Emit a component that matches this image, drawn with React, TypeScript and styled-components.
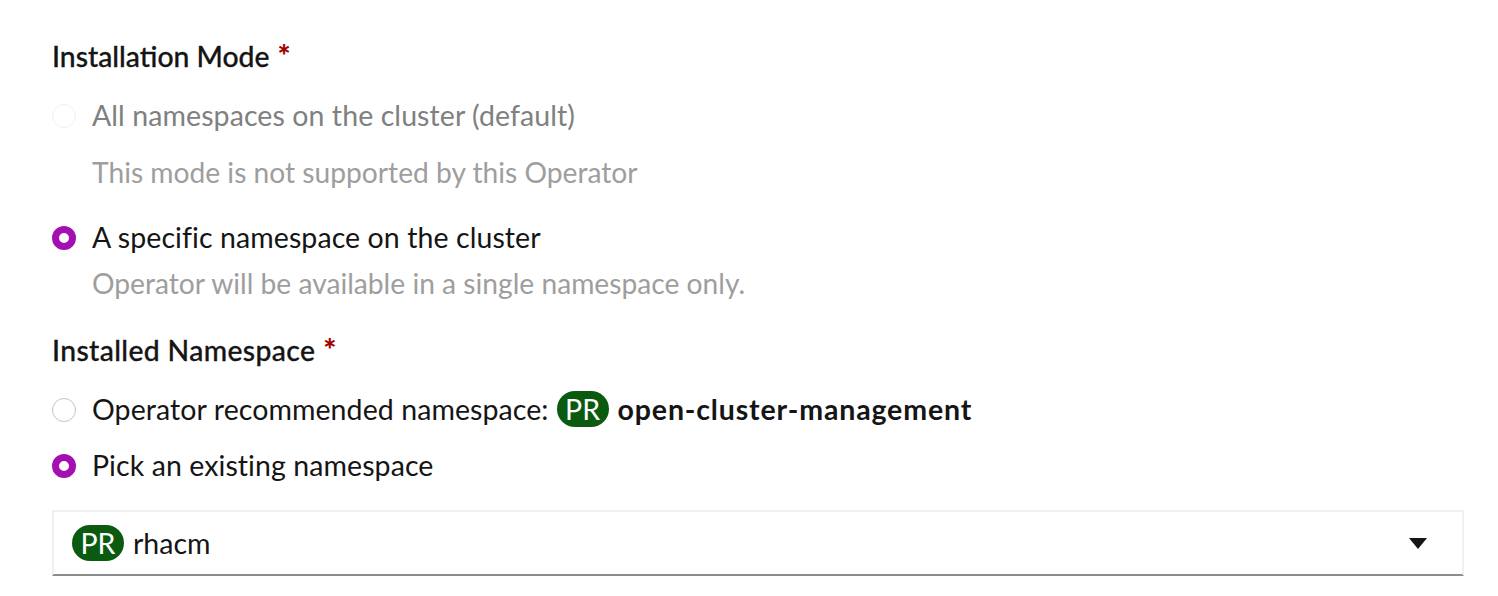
import React from "react";
import styled, { createGlobalStyle } from "styled-components";

const Global = createGlobalStyle`
  html, body { margin: 0; padding: 0; background: #fff; }
  body { font-family: Lato, "Open Sans", "Liberation Sans", sans-serif; color: #151515; }
`;

const Page = styled.div`
  width: 1498px;
  height: 596px;
  box-sizing: border-box;
  padding: 36px 34px 0 52px;
  overflow: hidden;
  display: flex;
  flex-direction: column;
`;

const Label = styled.div<{ $mt?: number; $track?: number }>`
  font-size: 28.3px;
  line-height: 40px;
  font-weight: 500;
  letter-spacing: ${(p) => p.$track ?? 0}px;
  -webkit-text-stroke: 0.3px #151515;
  margin-top: ${(p) => p.$mt ?? 0}px;
  white-space: nowrap;
`;

const Star = styled.span`
  color: #a30000;
  font-weight: 900;
  font-size: 31px;
  line-height: 0;
  -webkit-text-stroke: 0;
  margin-left: 8px;
`;

const Row = styled.div<{ $mt?: number }>`
  display: flex;
  align-items: center;
  gap: 16px;
  height: 40px;
  margin-top: ${(p) => p.$mt ?? 0}px;
`;

const Radio = styled.span<{ $on?: boolean; $off?: boolean }>`
  width: 24px;
  height: 24px;
  margin-top: 2px;
  box-sizing: border-box;
  border-radius: 50%;
  flex: none;
  background: #fff;
  border: ${(p) =>
    p.$on ? "7px solid #a30fb0" : p.$off ? "1.5px solid #f0f0f0" : "1.5px solid #c4c4c4"};
`;

const RowText = styled.span<{ $off?: boolean }>`
  font-size: 28.5px;
  letter-spacing: 0.08px;
  color: ${(p) => (p.$off ? "#808080" : "#151515")};
  white-space: nowrap;
  display: flex;
  align-items: center;
`;

const Help = styled.div<{ $mt?: number }>`
  font-size: 28.2px;
  line-height: 40px;
  color: #9e9e9e;
  margin-left: 40px;
  margin-top: ${(p) => p.$mt ?? 0}px;
  white-space: nowrap;
`;

const Badge = styled.span<{ $ml?: number }>`
  display: inline-flex;
  align-items: center;
  justify-content: center;
  width: 52px;
  height: 36px;
  border-radius: 18px;
  background: #0a5a0f;
  color: #fff;
  font-size: 28.5px;
  letter-spacing: 0;
  margin-left: ${(p) => p.$ml ?? 0}px;
  flex: none;
`;

const Name = styled.b`
  font-weight: 700;
  letter-spacing: 0.85px;
  margin-left: 9px;
`;

const Select = styled.div`
  margin-top: 25px;
  height: 66px;
  box-sizing: border-box;
  border: 2px solid #f0f0f0;
  border-bottom: 2px solid #8a8d90;
  padding: 0 35px 0 18px;
  display: flex;
  align-items: center;
  gap: 9px;
`;

const SelectText = styled.span`
  font-size: 28.5px;
  flex: 1;
`;

const Caret = styled.svg`
  width: 18px;
  height: 11px;
  flex: none;
`;

export default function App() {
  return (
    <Page>
      <Global />
      <Label>
        Installation Mode<Star>*</Star>
      </Label>
      <Row $mt={19}>
        <Radio $off />
        <RowText $off>All namespaces on the cluster (default)</RowText>
      </Row>
      <Help $mt={17}>This mode is not supported by this Operator</Help>
      <Row $mt={25}>
        <Radio $on />
        <RowText>A specific namespace on the cluster</RowText>
      </Row>
      <Help $mt={6}>Operator will be available in a single namespace only.</Help>
      <Label $mt={27} $track={0.37}>
        Installed Namespace<Star>*</Star>
      </Label>
      <Row $mt={19}>
        <Radio />
        <RowText>
          Operator recommended namespace:
          <Badge $ml={8}>PR</Badge>
          <Name>open-cluster-management</Name>
        </RowText>
      </Row>
      <Row $mt={16}>
        <Radio $on />
        <RowText>Pick an existing namespace</RowText>
      </Row>
      <Select>
        <Badge>PR</Badge>
        <SelectText>rhacm</SelectText>
        <Caret viewBox="0 0 18 11">
          <path d="M0 0H18L9 11Z" fill="#151515" />
        </Caret>
      </Select>
    </Page>
  );
}
